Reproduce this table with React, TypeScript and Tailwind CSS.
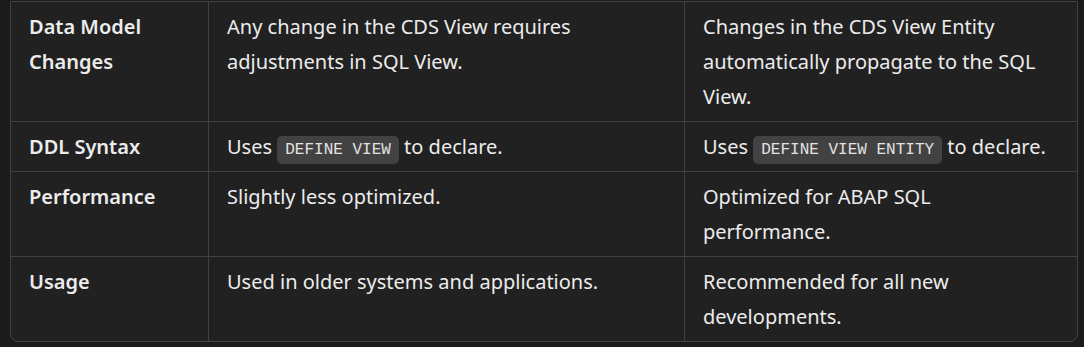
const rows: { label: string; old: React.ReactNode; entity: React.ReactNode }[] = [
  {
    label: "Data Model Changes",
    old: "Any change in the CDS View requires adjustments in SQL View.",
    entity: "Changes in the CDS View Entity automatically propagate to the SQL View.",
  },
  {
    label: "DDL Syntax",
    old: (
      <>
        Uses <Code>DEFINE VIEW</Code> to declare.
      </>
    ),
    entity: (
      <>
        Uses <Code>DEFINE VIEW ENTITY</Code> to declare.
      </>
    ),
  },
  {
    label: "Performance",
    old: "Slightly less optimized.",
    entity: "Optimized for ABAP SQL performance.",
  },
  {
    label: "Usage",
    old: "Used in older systems and applications.",
    entity: "Recommended for all new developments.",
  },
];

function Code({ children }: { children: React.ReactNode }) {
  return (
    <code className="rounded-[5px] bg-[#424242] px-[8px] py-[5px] font-['Liberation_Mono',monospace] text-[16px] leading-[18px] text-[#e3e3e3]">
      {children}
    </code>
  );
}

export default function App() {
  return (
    <div className="h-[347px] w-[1084px] overflow-hidden bg-[#1b1b1b] pt-px pl-[10px] font-['Noto_Sans',sans-serif] text-[20px] leading-[35px] text-[#ececec]">
      <div className="grid w-[1068px] grid-cols-[197px_476px_393px] overflow-hidden rounded-b-[8px] border border-[#414141] bg-[#212121]">
        {rows.map((r, i) => (
          <div key={r.label} className="contents">
            <div
              className={`py-[7px] pl-[18px] pr-[18px] font-semibold ${i > 0 ? "border-t border-[#414141]" : ""}`}
            >
              {r.label}
            </div>
            <div
              className={`border-l border-[#414141] py-[7px] pl-[18px] pr-[18px] ${i > 0 ? "border-t" : ""}`}
            >
              {r.old}
            </div>
            <div
              className={`border-l border-[#414141] py-[7px] pl-[18px] pr-[18px] ${i > 0 ? "border-t" : ""}`}
            >
              {r.entity}
            </div>
          </div>
        ))}
      </div>
    </div>
  );
}
